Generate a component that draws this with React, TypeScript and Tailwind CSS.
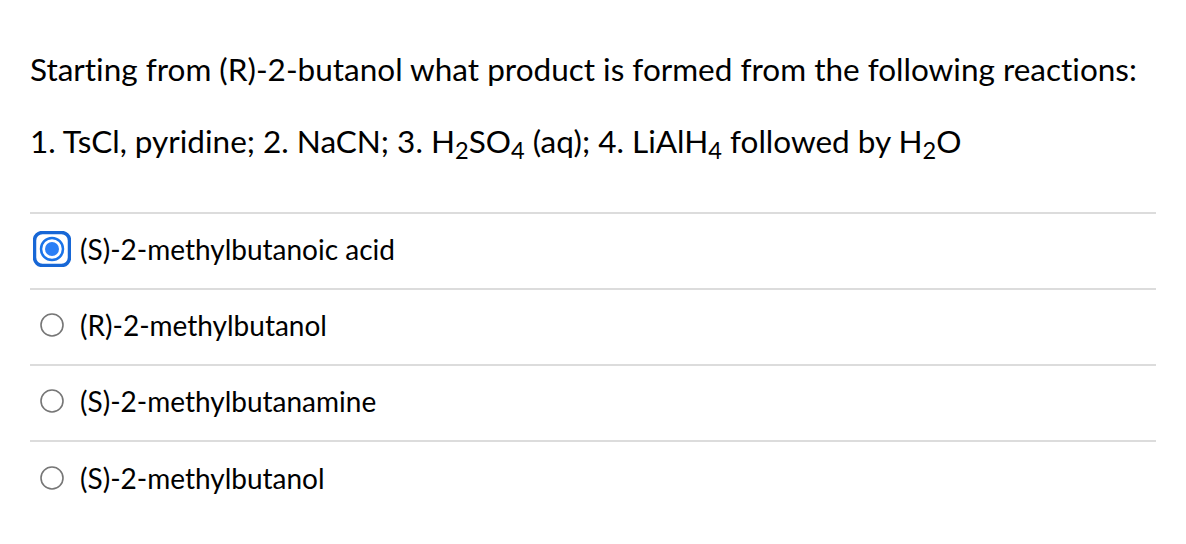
const options = [
  { id: 'a', label: '(S)-2-methylbutanoic acid', selected: true },
  { id: 'b', label: '(R)-2-methylbutanol', selected: false },
  { id: 'c', label: '(S)-2-methylbutanamine', selected: false },
  { id: 'd', label: '(S)-2-methylbutanol', selected: false },
]

const RadioOn = () => (
  <svg width="38" height="36" viewBox="0 0 38 36" className="shrink-0">
    <rect x="1.5" y="1.5" width="35" height="33" rx="8" fill="none" stroke="#1767d6" strokeWidth="3.5" />
    <circle cx="19" cy="18" r="11" fill="none" stroke="#1a73e8" strokeWidth="2.5" />
    <circle cx="19" cy="18" r="7" fill="#2b7ff6" />
  </svg>
)

const RadioOff = () => (
  <svg width="38" height="36" viewBox="0 0 38 36" className="shrink-0">
    <circle cx="19" cy="18" r="11" fill="white" stroke="#767676" strokeWidth="1.6" />
  </svg>
)

export default function App() {
  return (
    <div
      className="w-[1186px] h-[544px] bg-white text-black px-[30px] pt-[47px] [font-variant-ligatures:none]"
      style={{ fontFamily: 'Lato, "Open Sans", sans-serif' }}
    >
      <p className="text-[31.5px] leading-[44px] whitespace-nowrap">
        Starting from (R)-2-butanol what product is formed from the following reactions:
      </p>
      <p className="text-[31.5px] leading-[44px] mt-[28px] whitespace-nowrap">
        1. TsCl, pyridine; 2. NaCN; 3. H<sub>2</sub>SO<sub>4</sub> (aq); 4. LiAlH<sub>4</sub> followed by H<sub>2</sub>O
      </p>

      <div className="mt-[49px] border-t-2 border-[#dcdcdc]">
        {options.map((o) => (
          <div
            key={o.id}
            className="flex items-center gap-[9px] h-[76px] pb-[4px] border-b-2 border-[#dcdcdc] last:border-b-0 pl-[3px]"
          >
            {o.selected ? <RadioOn /> : <RadioOff />}
            <span className="text-[28px] leading-[34px]">{o.label}</span>
          </div>
        ))}
      </div>
    </div>
  )
}
